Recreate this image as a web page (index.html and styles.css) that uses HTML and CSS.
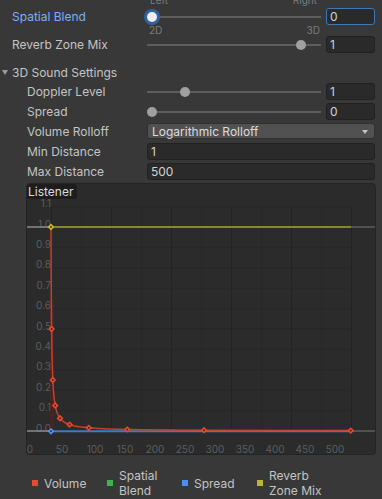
FILE: index.html
```
<!DOCTYPE html>
<html lang="en">
<head>
    <meta charset="UTF-8">
    <meta name="viewport" content="width=device-width, initial-scale=1.0">
    <link rel="stylesheet" href="styles.css">
</head>
<body>
    <div class="inspector">
        <div class="caps caps-top"><span>Left</span><span>Right</span></div>
        <div class="row row-blend">
            <label class="name focused">Spatial Blend</label>
            <div class="slider"><span class="knob active" style="--v: 0"></span></div>
            <input class="num focused" type="text" value="0">
        </div>
        <div class="caps caps-bottom"><span>2D</span><span>3D</span></div>

        <div class="row row-reverb">
            <label class="name">Reverb Zone Mix</label>
            <div class="slider"><span class="knob" style="--v: 0.909"></span></div>
            <input class="num" type="text" value="1">
        </div>

        <div class="foldout"><span class="arrow"></span>3D Sound Settings</div>

        <div class="row indent">
            <label class="name">Doppler Level</label>
            <div class="slider"><span class="knob" style="--v: 0.2"></span></div>
            <input class="num" type="text" value="1">
        </div>
        <div class="row indent">
            <label class="name">Spread</label>
            <div class="slider"><span class="knob" style="--v: 0"></span></div>
            <input class="num" type="text" value="0">
        </div>
        <div class="row indent">
            <label class="name">Volume Rolloff</label>
            <div class="dropdown">Logarithmic Rolloff</div>
        </div>
        <div class="row indent">
            <label class="name">Min Distance</label>
            <input class="wide" type="text" value="1">
        </div>
        <div class="row indent">
            <label class="name">Max Distance</label>
            <input class="wide" type="text" value="500">
        </div>
    </div>

    <div class="graph">
        <svg viewBox="1 1 348 270" width="348" height="270">
            <defs>
                <g id="key-red"><rect x="-2.4" y="-2.4" width="4.8" height="4.8" transform="rotate(45)" fill="#e44b33"/><circle r="1" fill="#5e1a10"/></g>
                <g id="key-yellow"><rect x="-2.4" y="-2.4" width="4.8" height="4.8" transform="rotate(45)" fill="#c9b52a"/><circle r="1" fill="#4a420e"/></g>
                <g id="key-blue"><rect x="-2.4" y="-2.4" width="4.8" height="4.8" transform="rotate(45)" fill="#4d93f2"/><circle r="1" fill="#173a6a"/></g>
            </defs>

            <!-- grid -->
            <g stroke="#000" stroke-opacity="0.09" stroke-width="1">
                <path d="M55.5 24V248M115.5 24V248M175.5 24V248M235.5 24V248M295.5 24V248"/>
                <path d="M25 227.6H325M25 207.2H325M25 186.8H325M25 166.4H325M25 125.6H325M25 105.2H325M25 84.8H325M25 64.4H325M25 24H325"/>
            </g>
            <g stroke="#000" stroke-opacity="0.17" stroke-width="1">
                <path d="M25.5 24V248M85.5 24V248M145.5 24V248M205.5 24V248M265.5 24V248M325.5 24V248"/>
                <path d="M25 146H325"/>
            </g>

            <!-- axis labels -->
            <g class="axis" text-anchor="end">
                <text x="25" y="24.1">1.1</text>
                <text x="25" y="44.5">1.0</text>
                <text x="25" y="64.9">0.9</text>
                <text x="25" y="85.3">0.8</text>
                <text x="25" y="105.7">0.7</text>
                <text x="25" y="126.1">0.6</text>
                <text x="25" y="146.5">0.5</text>
                <text x="25" y="166.9">0.4</text>
                <text x="25" y="187.3">0.3</text>
                <text x="25" y="207.7">0.2</text>
                <text x="25" y="228.1">0.1</text>
                <text x="25" y="248.5">0.0</text>
            </g>
            <g class="axis" text-anchor="middle">
                <text x="4" y="270">0</text>
                <text x="36" y="270">50</text>
                <text x="69" y="270">100</text>
                <text x="99" y="270">150</text>
                <text x="129" y="270">200</text>
                <text x="159" y="270">250</text>
                <text x="189" y="270">300</text>
                <text x="219" y="270">350</text>
                <text x="249" y="270">400</text>
                <text x="279" y="270">450</text>
                <text x="309" y="270">500</text>
            </g>

            <!-- outside curve range -->
            <path d="M0 44H25M0 248H25" stroke="#8a8a8a" stroke-width="1.4"/>
            <path d="M325 44H350M325 248H350" stroke="#5f5f5f" stroke-width="1.4"/>

            <rect x="24" y="117" width="4" height="131" fill="#6a2020" fill-opacity="0.45"/>

            <!-- curves -->
            <path d="M25 44H325" stroke="#a9a43a" stroke-width="1.6"/>
            <path d="M25 248.3H325" stroke="#3d7ac9" stroke-width="2"/>
            <polyline fill="none" stroke="#d8432c" stroke-width="1.5" stroke-opacity="0.9"
                points="25,44 25.06,62.5 25.15,84.8 25.3,112 25.45,131.4 25.6,146 25.9,166.4 26.2,180 26.8,197 27.4,207.2 28,214 29.2,222.5 30.4,227.6 31.6,231 34,235.25 36.4,237.8 38.8,239.5 43.6,241.6 48.4,242.9 53.2,243.75 62.8,244.8 72.4,245.45 82,245.9 101.2,246.4 139.6,246.9 178,247.2 254.8,247.5 324.4,247.6"/>

            <!-- keys -->
            <use href="#key-red" x="25.6" y="146"/>
            <use href="#key-red" x="26.8" y="197"/>
            <use href="#key-red" x="29.2" y="222.5"/>
            <use href="#key-red" x="34" y="235.25"/>
            <use href="#key-red" x="43.6" y="241.6"/>
            <use href="#key-red" x="62.8" y="244.8"/>
            <use href="#key-red" x="101.2" y="246.4"/>
            <use href="#key-red" x="178" y="247.2"/>
            <use href="#key-red" x="324.8" y="247.6"/>
            <use href="#key-blue" x="25" y="248.3"/>
            <use href="#key-yellow" x="25" y="44"/>

            <rect x="0" y="1" width="51" height="15" rx="3" fill="#1d1d1d"/>
            <text class="tag" x="2" y="13">Listener</text>
        </svg>
    </div>

    <div class="legend">
        <div class="item"><span class="swatch red"></span><span>Volume</span></div>
        <div class="item"><span class="swatch green"></span><span>Spatial Blend</span></div>
        <div class="item"><span class="swatch blue"></span><span>Spread</span></div>
        <div class="item"><span class="swatch yellow"></span><span>Reverb Zone Mix</span></div>
    </div>
</body>
</html>
```

FILE: styles.css
```
body {
    margin: 0;
    width: 382px;
    height: 499px;
    overflow: hidden;
    background-color: #383838;
    font-family: Inter, "Noto Sans", sans-serif;
    font-size: 12px;
    color: #c4c4c4;
}

.inspector {
    padding: 0 7px 0 12px;
}

.caps {
    display: flex;
    justify-content: space-between;
    height: 10px;
    line-height: 10px;
    font-size: 10px;
    color: #7c7c7c;
    margin: 0 55px 0 137px;
}

.caps-top {
    margin-top: -5px;
    margin-left: 138px;
    margin-right: 58px;
}

.row {
    display: flex;
    align-items: center;
    height: 20px;
}

.row-blend {
    height: 17px;
    padding-top: 3px;
}

.row-reverb {
    height: 17px;
    margin-top: 1px;
}

.name {
    flex: 0 0 135px;
    white-space: nowrap;
}

.name.focused {
    color: #7baefa;
}

.indent {
    padding-left: 15px;
}

.indent .name {
    flex-basis: 120px;
}

.slider {
    flex: 1;
    position: relative;
    height: 17px;
    margin-right: 5px;
}

.slider::before {
    content: "";
    position: absolute;
    left: 0;
    right: 0;
    top: 8px;
    height: 2px;
    background-color: #5e5e5e;
}

.knob {
    position: absolute;
    top: 4px;
    left: calc(var(--v) * (100% - 10px));
    width: 10px;
    height: 10px;
    border-radius: 50%;
    background-color: #a0a0a0;
}

.knob.active {
    background-color: #eeeeee;
    box-shadow: 0 0 0 3px #2f62a0;
}

input {
    box-sizing: border-box;
    height: 17px;
    margin: 0;
    padding: 0 3px;
    border: 1px solid #212121;
    border-radius: 3px;
    background-color: #2a2a2a;
    color: #d2d2d2;
    font-family: inherit;
    font-size: 12px;
    outline: none;
}

input.num {
    flex: 0 0 49px;
    width: 49px;
}

input.num.focused {
    border-color: #3a79bb;
}

input.wide {
    flex: 1;
    min-width: 0;
}

.dropdown {
    flex: 1;
    position: relative;
    box-sizing: border-box;
    height: 16px;
    line-height: 15px;
    padding-left: 4px;
    border: 1px solid #303030;
    border-radius: 3px;
    background-color: #515151;
    color: #dcdcdc;
}

.dropdown::after {
    content: "";
    position: absolute;
    right: 6px;
    top: 6px;
    border-left: 3.5px solid transparent;
    border-right: 3.5px solid transparent;
    border-top: 4px solid #c4c4c4;
}

.foldout {
    display: flex;
    align-items: center;
    height: 18px;
    margin: 10px 0 0 -10px;
}

.arrow {
    width: 0;
    height: 0;
    margin-right: 4px;
    border-left: 3px solid transparent;
    border-right: 3px solid transparent;
    border-top: 5px solid #9a9a9a;
}

.graph {
    margin: 2px 6px 0 26px;
    height: 270px;
    border: 1px solid #242424;
    border-radius: 4px;
    background-color: #2b2b2b;
    overflow: hidden;
}

.graph svg {
    display: block;
}

.axis text {
    font-family: Inter, "Noto Sans", sans-serif;
    font-size: 10px;
    fill: #5d5d5d;
}

.tag {
    font-family: Inter, "Noto Sans", sans-serif;
    font-size: 12px;
    fill: #dcdcdc;
}

.legend {
    display: flex;
    margin-top: 13px;
    padding-left: 32px;
    line-height: 15px;
}

.item {
    flex: 0 0 75px;
    display: flex;
    align-items: center;
}

.item span:last-child {
    max-width: 60px;
}

.swatch {
    flex: 0 0 6px;
    height: 6px;
    margin-right: 6px;
}

.red { background-color: #e24b34; }
.green { background-color: #3db44a; }
.blue { background-color: #4b8ff4; }
.yellow { background-color: #bcb632; }
```
